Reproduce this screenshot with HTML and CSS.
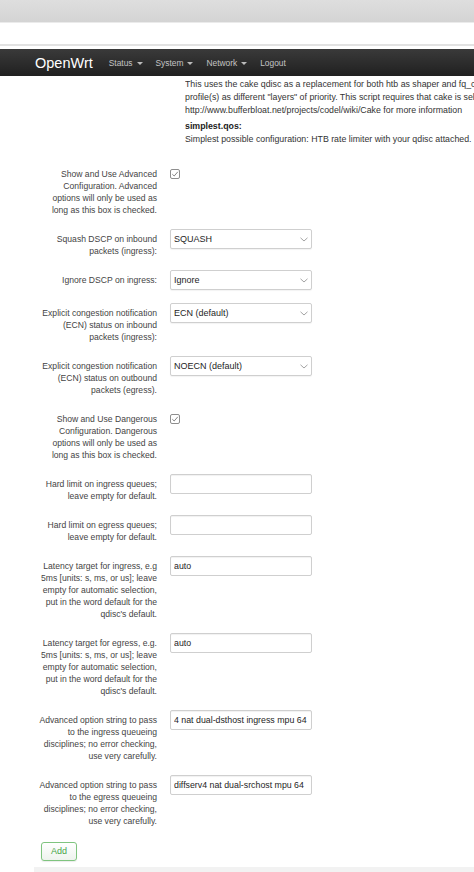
FILE: index.html
```html
<!DOCTYPE html>
<html>
<head>
<meta charset="utf-8">
<title>OpenWrt - SQM</title>
<link rel="stylesheet" href="styles.css">
</head>
<body>
<div class="chrome-top"></div>
<div class="chrome-bar"></div>
<div class="chrome-gap"></div>
<nav class="navbar">
  <span class="brand">OpenWrt</span>
  <ul class="menu">
    <li>Status <span class="caret"></span></li>
    <li>System <span class="caret"></span></li>
    <li>Network <span class="caret"></span></li>
    <li>Logout</li>
  </ul>
</nav>
<div class="desc">
  <div class="desc-inner">
    <p><b>layer_cake.qos:</b><br>This uses the cake qdisc as a replacement for both htb as shaper and fq_codel as leaf qdisc. This exercises cake's diffserv<br>profile(s) as different "layers" of priority. This script requires that cake is selected as qdisc, and forces its usage.<br>http://www.bufferbloat.net/projects/codel/wiki/Cake for more information</p>
    <p><b>simplest.qos:</b><br>Simplest possible configuration: HTB rate limiter with your qdisc attached.</p>
  </div>
</div>
<form class="form">
  <div class="row">
    <label class="lbl">Show and Use Advanced<br>Configuration. Advanced<br>options will only be used as<br>long as this box is checked.</label>
    <div class="ctl"><span class="check"><svg width="8" height="8" viewBox="0 0 8 8"><path d="M1.3 4.2 L3.2 6 L6.8 1.8" fill="none" stroke="#777" stroke-width="0.9"/></svg></span></div>
  </div>
  <div class="row">
    <label class="lbl">Squash DSCP on inbound<br>packets (ingress):</label>
    <div class="ctl"><div class="select"><span>SQUASH</span><svg width="8" height="5" viewBox="0 0 8 5"><path d="M0.5 0.8 L4 4 L7.5 0.8" fill="none" stroke="#999" stroke-width="0.9"/></svg></div></div>
  </div>
  <div class="row">
    <label class="lbl">Ignore DSCP on ingress:</label>
    <div class="ctl"><div class="select"><span>Ignore</span><svg width="8" height="5" viewBox="0 0 8 5"><path d="M0.5 0.8 L4 4 L7.5 0.8" fill="none" stroke="#999" stroke-width="0.9"/></svg></div></div>
  </div>
  <div class="row">
    <label class="lbl">Explicit congestion notification<br>(ECN) status on inbound<br>packets (ingress):</label>
    <div class="ctl"><div class="select"><span>ECN (default)</span><svg width="8" height="5" viewBox="0 0 8 5"><path d="M0.5 0.8 L4 4 L7.5 0.8" fill="none" stroke="#999" stroke-width="0.9"/></svg></div></div>
  </div>
  <div class="row">
    <label class="lbl">Explicit congestion notification<br>(ECN) status on outbound<br>packets (egress).</label>
    <div class="ctl"><div class="select"><span>NOECN (default)</span><svg width="8" height="5" viewBox="0 0 8 5"><path d="M0.5 0.8 L4 4 L7.5 0.8" fill="none" stroke="#999" stroke-width="0.9"/></svg></div></div>
  </div>
  <div class="row">
    <label class="lbl">Show and Use Dangerous<br>Configuration. Dangerous<br>options will only be used as<br>long as this box is checked.</label>
    <div class="ctl"><span class="check"><svg width="8" height="8" viewBox="0 0 8 8"><path d="M1.3 4.2 L3.2 6 L6.8 1.8" fill="none" stroke="#777" stroke-width="0.9"/></svg></span></div>
  </div>
  <div class="row">
    <label class="lbl">Hard limit on ingress queues;<br>leave empty for default.</label>
    <div class="ctl"><input class="text" type="text" value=""></div>
  </div>
  <div class="row">
    <label class="lbl">Hard limit on egress queues;<br>leave empty for default.</label>
    <div class="ctl"><input class="text" type="text" value=""></div>
  </div>
  <div class="row">
    <label class="lbl">Latency target for ingress, e.g<br>5ms [units: s, ms, or us]; leave<br>empty for automatic selection,<br>put in the word default for the<br>qdisc's default.</label>
    <div class="ctl"><input class="text" type="text" value="auto"></div>
  </div>
  <div class="row">
    <label class="lbl">Latency target for egress, e.g.<br>5ms [units: s, ms, or us]; leave<br>empty for automatic selection,<br>put in the word default for the<br>qdisc's default.</label>
    <div class="ctl"><input class="text" type="text" value="auto"></div>
  </div>
  <div class="row">
    <label class="lbl">Advanced option string to pass<br>to the ingress queueing<br>disciplines; no error checking,<br>use very carefully.</label>
    <div class="ctl"><input class="text" type="text" value="4 nat dual-dsthost ingress mpu 64"></div>
  </div>
  <div class="row">
    <label class="lbl">Advanced option string to pass<br>to the egress queueing<br>disciplines; no error checking,<br>use very carefully.</label>
    <div class="ctl"><input class="text" type="text" value="diffserv4 nat dual-srchost mpu 64"></div>
  </div>
  <div class="actions"><button type="button" class="btn-add">Add</button></div>
  <div class="section-end"></div>
</form>
</body>
</html>
```
FILE: styles.css
```css
html, body {
  margin: 0;
  padding: 0;
  background: #fff;
  overflow: hidden;
}
body {
  font-family: "Liberation Sans", Arial, sans-serif;
  color: #333;
}
.chrome-top {
  height: 22px;
  background: linear-gradient(#dedede, #d4d4d4);
  border-bottom: 1px solid #ebebeb;
}
.chrome-bar {
  height: 21px;
  background: #fff;
  border-bottom: 2px solid #e2e2e2;
}
.chrome-gap {
  height: 3px;
}
.navbar {
  height: 27px;
  background: linear-gradient(#3a3a3a, #202020);
  display: flex;
  align-items: center;
  padding-left: 35px;
}
.brand {
  color: #fff;
  font-size: 14.5px;
  margin-right: 16px;
}
.menu {
  list-style: none;
  margin: 0;
  padding: 0;
  display: flex;
  gap: 13px;
}
.menu li {
  color: #c4c4c4;
  font-size: 8.4px;
  display: flex;
  align-items: center;
  gap: 4px;
}
.caret {
  width: 0;
  height: 0;
  border-left: 3px solid transparent;
  border-right: 3px solid transparent;
  border-top: 3px solid #bbb;
  margin-top: 1px;
}
.desc {
  margin-left: 185px;
  overflow: hidden;
  white-space: nowrap;
}
.desc-inner {
  margin-top: -11px;
}
.desc p {
  margin: 0 0 4px 0;
  font-size: 8.8px;
  line-height: 13px;
  color: #333;
}
.desc p:first-child {
  margin-bottom: 3px;
}
.desc p:last-child {
  margin-bottom: 0;
}
.desc b {
  color: #222;
}
.form {
  margin: 18px 0 0 0;
  padding-left: 34px;
}
.row {
  display: grid;
  grid-template-columns: 123px 142px;
  column-gap: 13px;
  margin-bottom: 13px;
}
.lbl {
  text-align: right;
  white-space: nowrap;
  padding-top: 4px;
  font-size: 8.6px;
  line-height: 12px;
  color: #444;
}
.ctl {
  display: flex;
  align-items: flex-start;
}
.check {
  margin-top: 5px;
  width: 10px;
  height: 10px;
  box-sizing: border-box;
  border: 1px solid #8e8e8e;
  border-radius: 2px;
  background: #fff;
  display: flex;
  align-items: center;
  justify-content: center;
}
.select {
  width: 142px;
  height: 20px;
  box-sizing: border-box;
  border: 1px solid #cfcfcf;
  border-radius: 2px;
  background: #fff;
  display: flex;
  align-items: center;
  padding: 0 3px 0 3px;
  font-size: 9px;
  color: #1e1e1e;
  box-shadow: 0 1px 1px rgba(0,0,0,0.05);
}
.select svg {
  margin-left: auto;
}
.text {
  width: 142px;
  height: 20px;
  box-sizing: border-box;
  border: 1px solid #cfcfcf;
  border-radius: 2px;
  padding: 0 3px;
  margin: 0;
  font-family: "Liberation Sans", Arial, sans-serif;
  font-size: 8.8px;
  color: #1e1e1e;
  background: #fff;
  box-shadow: inset 0 1px 1px rgba(0,0,0,0.06);
  outline: none;
}
.actions {
  padding-left: 7px;
}
.btn-add {
  width: 36px;
  height: 19px;
  margin: 0;
  padding: 0;
  border: 1px solid #7fc47f;
  border-radius: 3px;
  background: linear-gradient(#ffffff, #eef3ee);
  color: #47a447;
  font-family: "Liberation Sans", Arial, sans-serif;
  font-size: 9px;
  box-shadow: 0 1px 1px rgba(0,0,0,0.08);
}
.section-end {
  margin-top: 6px;
  height: 20px;
  background: #f2f2f2;
}
```
